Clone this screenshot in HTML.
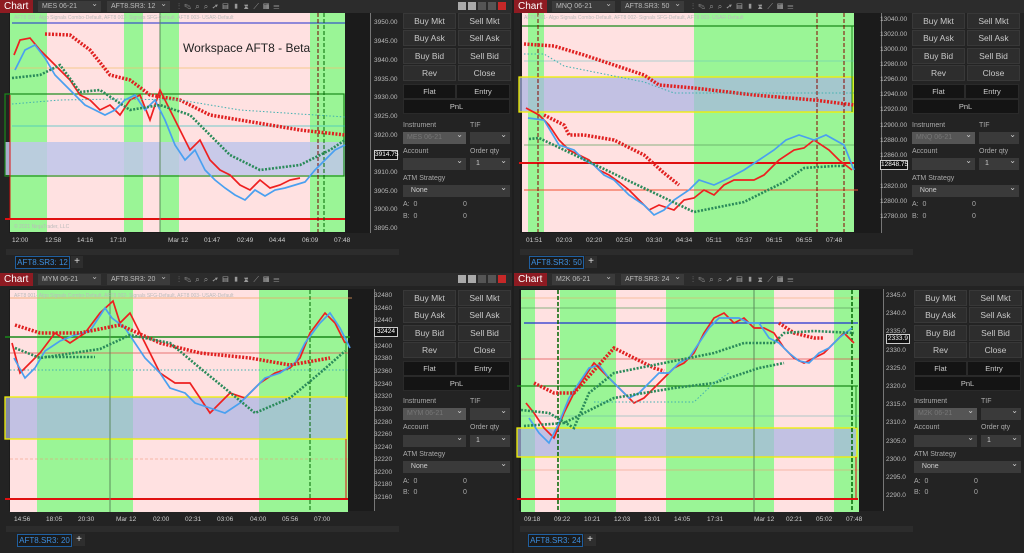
<!DOCTYPE html>
<html><head><meta charset="utf-8"><style>
*{margin:0;padding:0;box-sizing:border-box}
body{width:1024px;height:553px;background:#1e1e1e;font-family:"Liberation Sans",sans-serif;overflow:hidden;position:relative}
.p{position:absolute;width:512px;height:276px;background:#232323;overflow:hidden}
.tb{position:absolute;left:0;top:0;width:512px;height:13px;background:#2c2c2c}
.ct{position:absolute;left:0;top:0;width:33px;height:13px;background:#8e1b22;color:#fff;font-size:10px;line-height:13px;padding-left:4px}
.dd{position:absolute;top:1px;height:11px;background:#3b3b3b;color:#bbb;font-size:7px;line-height:11px;padding-left:4px}
.dd:after{content:"⌄";position:absolute;right:3px;top:-3px;font-size:8px}
.ic{position:absolute;top:1px;left:178px;color:#999;font-size:8px;letter-spacing:4px;line-height:11px}
.wb{position:absolute;top:2px;width:8px;height:8px;background:#aaa}
.wx{background:#c62828}
.plot{position:absolute;left:9px;top:13px;width:362px;height:220px;background:#1b1b1b;border-right:1px solid #777}
.ax{position:absolute;left:374px;font-size:6.5px;color:#bbb}
.tm{position:absolute;top:237px;font-size:6.5px;color:#ccc}
.sb{position:absolute;left:6px;top:249px;width:393px;height:6px;background:#2c2c2c}
.tab{position:absolute;left:15px;top:256px;width:55px;height:13px;border:1px solid #1f5fa0;background:#1a1a1a;color:#3d8fe0;font-size:8px;line-height:11px;text-align:center}
.plus{position:absolute;left:71px;top:256px;width:12px;height:12px;background:#2e2e2e;color:#ddd;font-size:10px;line-height:12px;text-align:center}
.b{position:absolute;width:53px;height:16px;background:#2d2d2d;border:1px solid #383838;color:#c8c8c8;font-size:8.5px;line-height:14px;text-align:center}
.d{position:absolute;height:15px;background:#141414;border:1px solid #2a2a2a;color:#ccc;font-size:7.5px;line-height:13px;text-align:center}
.l{position:absolute;color:#aaa;font-size:7px}
.s{position:absolute;height:12px;background:#3a3a3a;color:#777;font-size:7px;line-height:12px;padding-left:4px}
.s:after{content:"⌄";position:absolute;right:3px;top:-3px;color:#ccc;font-size:8px}
.pl{position:absolute;left:374px;width:24px;height:10px;background:#111;border:1px solid #ccc;color:#fff;font-size:6.5px;line-height:8px;text-align:center}
polyline[stroke-width="1.2"]{stroke-width:1.7}
polyline[stroke="#e02020"][stroke-dasharray="2,1.5"]{stroke-width:3.5}
polyline[stroke="#2a8a5a"][stroke-dasharray="2,1.5"]{stroke-width:2.6}
</style></head><body>

<!-- PANEL 1 -->
<div class="p" style="left:0;top:0">
<div class="tb"></div><div class="ct">Chart</div>
<div class="dd" style="left:38px;width:63px">MES 06-21</div><div class="dd" style="left:107px;width:63px">AFT8.SR3: 12</div>
<div class="ic">⫶✎⌕⌕➚▤▮♜⟋▦☰</div>
<div class="wb" style="left:458px"></div><div class="wb" style="left:468px"></div><div class="wb" style="left:478px;background:#555"></div><div class="wb" style="left:488px;background:#555"></div><div class="wb wx" style="left:498px"></div>
<div class="plot"></div>
<svg style="position:absolute;left:0;top:0" width="400" height="240">
<rect x="10" y="13" width="335" height="219" fill="#ffe1e1"/>
<g fill="#9af596"><rect x="10" y="13" width="37" height="219"/><rect x="124" y="13" width="19" height="219"/><rect x="160" y="13" width="19" height="219"/><rect x="310" y="13" width="35" height="219"/></g>
<rect x="5" y="142" width="340" height="33" fill="#c0c6ea" opacity=".85"/>
<line x1="12" y1="23" x2="345" y2="23" stroke="#2030d0"/>
<line x1="10" y1="68" x2="345" y2="68" stroke="#f0c070" stroke-width=".7"/>
<rect x="5" y="94" width="339" height="82" fill="none" stroke="#1a8a1a" stroke-width="1.2"/>
<line x1="12" y1="126" x2="345" y2="126" stroke="#40c0c0" stroke-width=".7"/>
<line x1="5" y1="219" x2="345" y2="219" stroke="#e01010" stroke-width="2"/>
<line x1="10" y1="219" x2="10" y2="95" stroke="#e01010"/>
<line x1="160" y1="13" x2="160" y2="232" stroke="#5a8a5a"/>
<line x1="318" y1="13" x2="318" y2="232" stroke="#700" stroke-dasharray="4,2"/><line x1="324" y1="13" x2="324" y2="232" stroke="#060" stroke-dasharray="4,2"/>
<polyline fill="none" stroke="#ee2020" stroke-width="1.2" points="14,55 20,40 30,38 40,50 50,60 60,70 70,80 80,95 90,100 100,110 110,105 120,115 130,100 140,95 150,120 160,90 170,110 180,130 190,150 200,140 210,160 220,170 230,175 240,185 250,190 260,180 270,188 280,185 290,180 300,178"/>
<polyline fill="none" stroke="#4aa0f0" stroke-width="1.2" points="15,70 25,50 35,45 45,58 55,75 65,85 75,95 85,105 95,110 105,115 115,110 125,100 135,95 145,110 155,100 165,120 175,145 185,160 195,150 205,170 215,180 225,188 235,195 245,200 255,190 265,196 275,190 285,188 295,185 305,182 315,170 325,160 335,150 345,145"/>
<polyline fill="none" stroke="#e02020" stroke-width="2.5" stroke-dasharray="2,1.5" points="45,34 70,35 90,50 110,75 130,80 150,95 180,100 210,115 240,120 270,125 300,130 345,135"/>
<polyline fill="none" stroke="#2a8a5a" stroke-width="2" stroke-dasharray="2,1.5" points="12,78 40,75 60,65 80,92 100,90 130,110 160,105 190,115 230,155 260,170 300,165 330,150 345,140"/>
<polyline fill="none" stroke="#40b0b0" stroke-width="1" stroke-dasharray="1.5,2" points="12,104 60,100 120,99 180,100 240,110 345,117"/>
<text x="183" y="52" font-size="12" fill="#222" font-family="Liberation Sans">Workspace AFT8 - Beta</text>
<text x="14" y="228" font-size="5" fill="#bbb">© 2021 NinjaTrader, LLC</text>
<text x="14" y="19" font-size="5" fill="#bbb">AFT8 001- Algo Signals Combo-Default,  AFT8 002- Signals SFG-Default,  AFT8 003- USAR-Default</text>
</svg>
<div class="ax" style="top:19px">3950.00</div><div class="ax" style="top:38px">3945.00</div><div class="ax" style="top:57px">3940.00</div><div class="ax" style="top:76px">3935.00</div><div class="ax" style="top:94px">3930.00</div><div class="ax" style="top:113px">3925.00</div><div class="ax" style="top:132px">3920.00</div><div class="ax" style="top:169px">3910.00</div><div class="ax" style="top:188px">3905.00</div><div class="ax" style="top:206px">3900.00</div><div class="ax" style="top:225px">3895.00</div>
<div class="pl" style="top:150px">3914.75</div>
<div class="tm" style="left:12px">12:00</div><div class="tm" style="left:45px">12:58</div><div class="tm" style="left:77px">14:16</div><div class="tm" style="left:110px">17:10</div><div class="tm" style="left:168px">Mar 12</div><div class="tm" style="left:204px">01:47</div><div class="tm" style="left:237px">02:49</div><div class="tm" style="left:269px">04:44</div><div class="tm" style="left:302px">06:09</div><div class="tm" style="left:334px">07:48</div>
<div class="sb"></div><div class="tab">AFT8.SR3: 12</div><div class="plus">+</div>
<div class="b" style="left:403px;top:13px">Buy Mkt</div><div class="b" style="left:458px;top:13px">Sell Mkt</div>
<div class="b" style="left:403px;top:30px">Buy Ask</div><div class="b" style="left:458px;top:30px">Sell Ask</div>
<div class="b" style="left:403px;top:48px">Buy Bid</div><div class="b" style="left:458px;top:48px">Sell Bid</div>
<div class="b" style="left:403px;top:65px">Rev</div><div class="b" style="left:458px;top:65px">Close</div>
<div class="d" style="left:403px;top:84px;width:53px">Flat</div><div class="d" style="left:456px;top:84px;width:54px">Entry</div><div class="d" style="left:403px;top:99px;width:107px">PnL</div>
<div class="l" style="left:403px;top:122px">Instrument</div><div class="l" style="left:470px;top:122px">TIF</div>
<div class="s" style="left:403px;top:132px;width:63px;background:#555">MES 06-21</div><div class="s" style="left:470px;top:132px;width:40px"></div>
<div class="l" style="left:403px;top:148px">Account</div><div class="l" style="left:470px;top:148px">Order qty</div>
<div class="s" style="left:403px;top:158px;width:63px"></div><div class="s" style="left:470px;top:158px;width:40px;color:#ccc">&nbsp;1</div>
<div class="l" style="left:403px;top:175px">ATM Strategy</div>
<div class="s" style="left:403px;top:185px;width:107px;color:#ccc">&nbsp;&nbsp;None</div>
<div class="l" style="left:403px;top:201px">A:&nbsp; 0</div><div class="l" style="left:463px;top:201px">0</div>
<div class="l" style="left:403px;top:213px">B:&nbsp; 0</div><div class="l" style="left:463px;top:213px">0</div>
</div>

<!-- PANEL 2 -->
<div class="p" style="left:514px;top:0;width:510px">
<div class="tb"></div><div class="ct">Chart</div>
<div class="dd" style="left:38px;width:63px">MNQ 06-21</div><div class="dd" style="left:107px;width:63px">AFT8.SR3: 50</div>
<div class="ic">⫶✎⌕⌕➚▤▮♜⟋▦☰</div>
<div class="plot" style="left:6px"></div>
<svg style="position:absolute;left:0;top:0" width="400" height="240">
<rect x="8" y="13" width="332" height="219" fill="#ffe1e1"/>
<g fill="#9af596"><rect x="14" y="13" width="16" height="219"/><rect x="180" y="13" width="160" height="219"/></g>
<rect x="5" y="77" width="334" height="35" fill="#a8b4e4" opacity=".7"/>
<rect x="5" y="77" width="334" height="35" fill="none" stroke="#f0f000" stroke-width="1.3"/>
<line x1="8" y1="26" x2="340" y2="26" stroke="#1a8a1a" stroke-width="1.2"/><line x1="338" y1="26" x2="338" y2="112" stroke="#1a8a1a"/>
<line x1="10" y1="61" x2="340" y2="61" stroke="#60c0c0" stroke-width=".6"/>
<line x1="10" y1="145" x2="340" y2="145" stroke="#60a060" stroke-width=".7"/>
<line x1="5" y1="163" x2="340" y2="163" stroke="#e01010" stroke-width="2"/>
<line x1="10" y1="190" x2="344" y2="190" stroke="#f05030"/>
<line x1="24" y1="13" x2="24" y2="232" stroke="#800" stroke-dasharray="4,2"/><line x1="303" y1="13" x2="303" y2="232" stroke="#800" stroke-dasharray="4,2"/><line x1="330" y1="13" x2="330" y2="232" stroke="#800" stroke-dasharray="4,2"/>
<polyline fill="none" stroke="#e02020" stroke-width="2.5" stroke-dasharray="2,1.5" points="10,44 40,46 70,55 100,65 130,75 145,85 180,88 240,95 300,100 340,105"/>
<polyline fill="none" stroke="#40b0b0" stroke-width="1" stroke-dasharray="1.5,2" points="10,54 30,54 50,66 80,72 110,78 130,82 160,93 220,93 340,93"/>
<polyline fill="none" stroke="#ee2020" stroke-width="1.2" points="12,108 25,115 35,125 45,140 55,150 65,155 75,160 85,170 95,175 105,182 115,190 125,200 135,210 145,205 160,210 170,200 180,198 190,190 200,195 210,185 220,180 240,180 250,175 265,160 280,150 290,148 300,140 315,150 325,160 338,170"/>
<polyline fill="none" stroke="#4aa0f0" stroke-width="1.2" points="14,118 30,120 45,145 60,150 70,160 80,165 90,175 100,180 115,195 130,205 140,215 150,210 160,200 175,190 185,180 200,185 215,178 230,170 245,160 260,150 272,140 285,135 300,140 312,135 330,145 340,170"/>
<polyline fill="none" stroke="#e02020" stroke-width="2" stroke-dasharray="2,1.5" points="30,115 50,125 55,135 70,135 100,140 130,155 150,173 165,185"/>
<polyline fill="none" stroke="#2a8a5a" stroke-width="2" stroke-dasharray="2,1.5" points="15,139 25,138 180,212 230,202 270,182 290,168 320,166 330,166"/>
<text x="10" y="19" font-size="5" fill="#bbb">AFT8 001- Algo Signals Combo-Default,  AFT8 002- Signals SFG-Default,  AFT8 003- USAR-Default</text>
</svg>
<div class="ax" style="left:366px;top:16px">13040.00</div><div class="ax" style="left:366px;top:31px">13020.00</div><div class="ax" style="left:366px;top:46px">13000.00</div><div class="ax" style="left:366px;top:61px">12980.00</div><div class="ax" style="left:366px;top:76px">12960.00</div><div class="ax" style="left:366px;top:91px">12940.00</div><div class="ax" style="left:366px;top:106px">12920.00</div><div class="ax" style="left:366px;top:122px">12900.00</div><div class="ax" style="left:366px;top:137px">12880.00</div><div class="ax" style="left:366px;top:152px">12860.00</div><div class="ax" style="left:366px;top:183px">12820.00</div><div class="ax" style="left:366px;top:198px">12800.00</div><div class="ax" style="left:366px;top:213px">12780.00</div>
<div class="pl" style="left:366px;top:160px;width:28px">12848.75</div>
<div class="tm" style="left:12px">01:51</div><div class="tm" style="left:42px">02:03</div><div class="tm" style="left:72px">02:20</div><div class="tm" style="left:102px">02:50</div><div class="tm" style="left:132px">03:30</div><div class="tm" style="left:162px">04:34</div><div class="tm" style="left:192px">05:11</div><div class="tm" style="left:222px">05:37</div><div class="tm" style="left:252px">06:15</div><div class="tm" style="left:282px">06:55</div><div class="tm" style="left:312px">07:48</div>
<div class="sb"></div><div class="tab">AFT8.SR3: 50</div><div class="plus">+</div>
<div class="b" style="left:398px;top:13px">Buy Mkt</div><div class="b" style="left:453px;top:13px">Sell Mkt</div>
<div class="b" style="left:398px;top:30px">Buy Ask</div><div class="b" style="left:453px;top:30px">Sell Ask</div>
<div class="b" style="left:398px;top:48px">Buy Bid</div><div class="b" style="left:453px;top:48px">Sell Bid</div>
<div class="b" style="left:398px;top:65px">Rev</div><div class="b" style="left:453px;top:65px">Close</div>
<div class="d" style="left:398px;top:84px;width:53px">Flat</div><div class="d" style="left:451px;top:84px;width:54px">Entry</div><div class="d" style="left:398px;top:99px;width:107px">PnL</div>
<div class="l" style="left:398px;top:122px">Instrument</div><div class="l" style="left:465px;top:122px">TIF</div>
<div class="s" style="left:398px;top:132px;width:63px;background:#555">MNQ 06-21</div><div class="s" style="left:465px;top:132px;width:40px"></div>
<div class="l" style="left:398px;top:148px">Account</div><div class="l" style="left:465px;top:148px">Order qty</div>
<div class="s" style="left:398px;top:158px;width:63px"></div><div class="s" style="left:465px;top:158px;width:40px;color:#ccc">&nbsp;1</div>
<div class="l" style="left:398px;top:175px">ATM Strategy</div>
<div class="s" style="left:398px;top:185px;width:107px;color:#ccc">&nbsp;&nbsp;None</div>
<div class="l" style="left:398px;top:201px">A:&nbsp; 0</div><div class="l" style="left:458px;top:201px">0</div>
<div class="l" style="left:398px;top:213px">B:&nbsp; 0</div><div class="l" style="left:458px;top:213px">0</div>
</div>

<!-- PANEL 3 -->
<div class="p" style="left:0;top:273px;height:280px">
<div class="tb"></div><div class="ct">Chart</div>
<div class="dd" style="left:38px;width:63px">MYM 06-21</div><div class="dd" style="left:107px;width:63px">AFT8.SR3: 20</div>
<div class="ic">⫶✎⌕⌕➚▤▮♜⟋▦☰</div>
<div class="wb" style="left:458px"></div><div class="wb" style="left:468px"></div><div class="wb" style="left:478px;background:#555"></div><div class="wb" style="left:488px;background:#555"></div><div class="wb wx" style="left:498px"></div>
<div class="plot" style="top:16px;height:222px;width:366px"></div>
<svg style="position:absolute;left:0;top:0" width="400" height="245">
<rect x="10" y="17" width="338" height="222" fill="#ffe1e1"/>
<g fill="#9af596"><rect x="37" y="17" width="96" height="222"/><rect x="259" y="17" width="89" height="222"/></g>
<rect x="5" y="124" width="342" height="42" fill="#a8b4e4" opacity=".7"/>
<rect x="5" y="124" width="342" height="42" fill="none" stroke="#f0f000" stroke-width="1.3"/>
<line x1="10" y1="25" x2="352" y2="25" stroke="#f0a060" stroke-width=".7"/>
<line x1="5" y1="64" x2="350" y2="64" stroke="#1a8a1a" stroke-width="1.5"/><line x1="346" y1="64" x2="346" y2="124" stroke="#1a8a1a"/>
<line x1="10" y1="80" x2="348" y2="80" stroke="#e05050" stroke-width=".7"/>
<line x1="10" y1="186" x2="348" y2="186" stroke="#f09070" stroke-width=".6" stroke-dasharray="3,2"/>
<line x1="5" y1="226" x2="348" y2="226" stroke="#e01010" stroke-width="2"/><line x1="346" y1="166" x2="346" y2="226" stroke="#e01010"/>
<line x1="110" y1="17" x2="110" y2="239" stroke="#5a8a5a"/>
<line x1="310" y1="17" x2="310" y2="239" stroke="#060" stroke-dasharray="4,2"/>
<line x1="10" y1="97" x2="348" y2="97" stroke="#40b0b0" stroke-width="1" stroke-dasharray="1.5,2"/>
<polyline fill="none" stroke="#ee2020" stroke-width="1.2" points="12,70 20,100 30,90 40,80 55,60 70,70 85,60 100,40 113,28 120,50 130,40 140,60 150,80 160,100 175,110 190,110 200,125 210,140 220,130 230,120 245,125 260,110 275,100 290,95 300,85 310,60 325,40 335,50 345,70"/>
<polyline fill="none" stroke="#4aa0f0" stroke-width="1.2" points="14,85 25,105 35,95 45,78 60,68 75,62 90,58 105,35 112,45 125,55 135,70 145,85 160,100 170,115 185,120 195,130 210,135 225,140 240,130 255,115 265,105 280,100 295,90 305,70 320,50 330,40 340,55 350,75"/>
<polyline fill="none" stroke="#e02020" stroke-width="2.5" stroke-dasharray="2,1.5" points="15,52 40,60 80,60 120,52 160,70 200,80 250,85 290,92 330,85"/>
<polyline fill="none" stroke="#2a8a5a" stroke-width="2" stroke-dasharray="2,1.5" points="15,75 40,85 100,76 130,62 170,70 200,95 255,140 290,125 320,100 345,78"/>
<polyline fill="none" stroke="#2a8a5a" stroke-width="2" stroke-dasharray="2,1.5" points="45,84 95,84"/>
<text x="14" y="24" font-size="5" fill="#bbb">AFT8 001- Algo Signals Combo-Default,  AFT8 002- Signals SFG-Default,  AFT8 003- USAR-Default</text>
</svg>
<div class="ax" style="top:19px">32480</div><div class="ax" style="top:32px">32460</div><div class="ax" style="top:44px">32440</div><div class="ax" style="top:70px">32400</div><div class="ax" style="top:82px">32380</div><div class="ax" style="top:95px">32360</div><div class="ax" style="top:108px">32340</div><div class="ax" style="top:120px">32320</div><div class="ax" style="top:133px">32300</div><div class="ax" style="top:146px">32280</div><div class="ax" style="top:158px">32260</div><div class="ax" style="top:171px">32240</div><div class="ax" style="top:183px">32220</div><div class="ax" style="top:196px">32200</div><div class="ax" style="top:208px">32180</div><div class="ax" style="top:221px">32160</div>
<div class="pl" style="top:54px">32424</div>
<div class="tm" style="left:14px;top:243px">14:56</div><div class="tm" style="left:46px;top:243px">18:05</div><div class="tm" style="left:78px;top:243px">20:30</div><div class="tm" style="left:116px;top:243px">Mar 12</div><div class="tm" style="left:153px;top:243px">02:00</div><div class="tm" style="left:185px;top:243px">02:31</div><div class="tm" style="left:217px;top:243px">03:06</div><div class="tm" style="left:250px;top:243px">04:00</div><div class="tm" style="left:282px;top:243px">05:56</div><div class="tm" style="left:314px;top:243px">07:00</div>
<div class="sb" style="top:253px"></div><div class="tab" style="top:261px;left:17px">AFT8.SR3: 20</div><div class="plus" style="top:261px;left:73px">+</div>
<div class="b" style="left:403px;top:17px">Buy Mkt</div><div class="b" style="left:458px;top:17px">Sell Mkt</div>
<div class="b" style="left:403px;top:34px">Buy Ask</div><div class="b" style="left:458px;top:34px">Sell Ask</div>
<div class="b" style="left:403px;top:52px">Buy Bid</div><div class="b" style="left:458px;top:52px">Sell Bid</div>
<div class="b" style="left:403px;top:69px">Rev</div><div class="b" style="left:458px;top:69px">Close</div>
<div class="d" style="left:403px;top:88px;width:53px">Flat</div><div class="d" style="left:456px;top:88px;width:54px">Entry</div><div class="d" style="left:403px;top:103px;width:107px">PnL</div>
<div class="l" style="left:403px;top:125px">Instrument</div><div class="l" style="left:470px;top:125px">TIF</div>
<div class="s" style="left:403px;top:135px;width:63px;background:#555">MYM 06-21</div><div class="s" style="left:470px;top:135px;width:40px"></div>
<div class="l" style="left:403px;top:151px">Account</div><div class="l" style="left:470px;top:151px">Order qty</div>
<div class="s" style="left:403px;top:162px;width:63px"></div><div class="s" style="left:470px;top:162px;width:40px;color:#ccc">&nbsp;1</div>
<div class="l" style="left:403px;top:178px">ATM Strategy</div>
<div class="s" style="left:403px;top:188px;width:107px;color:#ccc">&nbsp;&nbsp;None</div>
<div class="l" style="left:403px;top:205px">A:&nbsp; 0</div><div class="l" style="left:463px;top:205px">0</div>
<div class="l" style="left:403px;top:216px">B:&nbsp; 0</div><div class="l" style="left:463px;top:216px">0</div>
</div>

<!-- PANEL 4 -->
<div class="p" style="left:514px;top:273px;width:510px;height:280px">
<div class="tb"></div><div class="ct">Chart</div>
<div class="dd" style="left:38px;width:63px">M2K 06-21</div><div class="dd" style="left:107px;width:63px">AFT8.SR3: 24</div>
<div class="ic">⫶✎⌕⌕➚▤▮♜⟋▦☰</div>
<div class="plot" style="left:5px;top:16px;height:222px;width:365px"></div>
<svg style="position:absolute;left:0;top:0" width="400" height="245">
<rect x="7" y="17" width="338" height="222" fill="#ffe1e1"/>
<g fill="#9af596"><rect x="7" y="17" width="14" height="222"/><rect x="46" y="17" width="56" height="222"/><rect x="152" y="17" width="108" height="222"/><rect x="320" y="17" width="25" height="222"/></g>
<rect x="3" y="155" width="340" height="29" fill="#a8b4e4" opacity=".7"/>
<rect x="3" y="155" width="340" height="29" fill="none" stroke="#f0f000" stroke-width="1.3"/>
<line x1="7" y1="25" x2="345" y2="25" stroke="#f0a060" stroke-width=".6"/>
<line x1="7" y1="35" x2="345" y2="35" stroke="#60a060" stroke-width=".7"/>
<line x1="10" y1="50" x2="344" y2="50" stroke="#2030d0" stroke-width="1.2"/>
<line x1="3" y1="113" x2="344" y2="113" stroke="#1a8a1a" stroke-width="1.2"/><line x1="342" y1="113" x2="342" y2="155" stroke="#1a8a1a"/>
<line x1="7" y1="86" x2="345" y2="86" stroke="#e05050" stroke-width=".7"/>
<line x1="7" y1="143" x2="345" y2="143" stroke="#60b0b0" stroke-width=".6"/>
<line x1="7" y1="197" x2="345" y2="197" stroke="#f09070" stroke-width=".6"/>
<line x1="3" y1="226" x2="344" y2="226" stroke="#e01010" stroke-width="2"/><line x1="342" y1="184" x2="342" y2="226" stroke="#e01010"/>
<line x1="240" y1="17" x2="240" y2="239" stroke="#5a8a5a"/>
<line x1="44" y1="17" x2="44" y2="239" stroke="#060" stroke-dasharray="4,2" stroke-width="1.5"/><line x1="338" y1="17" x2="338" y2="239" stroke="#060" stroke-dasharray="4,2" stroke-width="1.5"/>
<polyline fill="none" stroke="#ee2020" stroke-width="1.2" points="12,130 20,140 30,155 40,165 50,140 60,120 70,105 80,90 90,100 100,110 110,120 120,130 130,125 140,115 150,105 160,95 170,90 180,80 190,60 200,45 210,40 220,50 230,45 240,55 250,55 260,60 270,75 280,85 290,90 300,85 310,80 320,70 330,60 340,70"/>
<polyline fill="none" stroke="#4aa0f0" stroke-width="1.2" points="15,145 25,160 35,170 45,150 55,125 65,110 75,95 85,92 95,105 105,115 115,125 125,120 135,110 145,100 155,100 165,90 175,85 185,70 195,55 205,45 215,45 225,45 235,50 245,50 255,65 265,70 275,80 285,88 295,90 305,80 315,75 325,65 338,55"/>
<polyline fill="none" stroke="#e02020" stroke-width="2.5" stroke-dasharray="2,1.5" points="20,110 40,120 60,120 100,75 120,85 140,95 150,98"/>
<polyline fill="none" stroke="#e02020" stroke-width="2.5" stroke-dasharray="2,1.5" points="265,50 280,60 300,65 310,65"/>
<polyline fill="none" stroke="#2a8a5a" stroke-width="2" stroke-dasharray="2,1.5" points="7,137 35,140 60,155 75,120 100,100 150,90 200,80 230,70 260,70 270,60 300,58 340,60"/>
<polyline fill="none" stroke="#2a8a5a" stroke-width="2" stroke-dasharray="2,1.5" points="10,153 50,150 100,125 160,115 200,110 245,95 270,90"/>
<polyline fill="none" stroke="#40b0b0" stroke-width="1" stroke-dasharray="1.5,2" points="80,129 180,129 200,110 215,100"/>
</svg>
<div class="ax" style="left:372px;top:19px">2345.0</div><div class="ax" style="left:372px;top:37px">2340.0</div><div class="ax" style="left:372px;top:55px">2335.0</div><div class="ax" style="left:372px;top:74px">2330.0</div><div class="ax" style="left:372px;top:92px">2325.0</div><div class="ax" style="left:372px;top:110px">2320.0</div><div class="ax" style="left:372px;top:128px">2315.0</div><div class="ax" style="left:372px;top:146px">2310.0</div><div class="ax" style="left:372px;top:165px">2305.0</div><div class="ax" style="left:372px;top:183px">2300.0</div><div class="ax" style="left:372px;top:201px">2295.0</div><div class="ax" style="left:372px;top:219px">2290.0</div>
<div class="pl" style="left:372px;top:61px">2333.9</div>
<div class="tm" style="left:10px;top:243px">09:18</div><div class="tm" style="left:40px;top:243px">09:22</div><div class="tm" style="left:70px;top:243px">10:21</div><div class="tm" style="left:100px;top:243px">12:03</div><div class="tm" style="left:130px;top:243px">13:01</div><div class="tm" style="left:160px;top:243px">14:05</div><div class="tm" style="left:193px;top:243px">17:31</div><div class="tm" style="left:240px;top:243px">Mar 12</div><div class="tm" style="left:272px;top:243px">02:21</div><div class="tm" style="left:302px;top:243px">05:02</div><div class="tm" style="left:332px;top:243px">07:48</div>
<div class="sb" style="top:253px"></div><div class="tab" style="top:261px;left:14px">AFT8.SR3: 24</div><div class="plus" style="top:261px;left:70px">+</div>
<div class="b" style="left:400px;top:17px">Buy Mkt</div><div class="b" style="left:455px;top:17px">Sell Mkt</div>
<div class="b" style="left:400px;top:34px">Buy Ask</div><div class="b" style="left:455px;top:34px">Sell Ask</div>
<div class="b" style="left:400px;top:52px">Buy Bid</div><div class="b" style="left:455px;top:52px">Sell Bid</div>
<div class="b" style="left:400px;top:69px">Rev</div><div class="b" style="left:455px;top:69px">Close</div>
<div class="d" style="left:400px;top:88px;width:53px">Flat</div><div class="d" style="left:453px;top:88px;width:54px">Entry</div><div class="d" style="left:400px;top:103px;width:107px">PnL</div>
<div class="l" style="left:400px;top:125px">Instrument</div><div class="l" style="left:467px;top:125px">TIF</div>
<div class="s" style="left:400px;top:135px;width:63px;background:#555">M2K 06-21</div><div class="s" style="left:467px;top:135px;width:40px"></div>
<div class="l" style="left:400px;top:151px">Account</div><div class="l" style="left:467px;top:151px">Order qty</div>
<div class="s" style="left:400px;top:162px;width:63px"></div><div class="s" style="left:467px;top:162px;width:40px;color:#ccc">&nbsp;1</div>
<div class="l" style="left:400px;top:178px">ATM Strategy</div>
<div class="s" style="left:400px;top:188px;width:107px;color:#ccc">&nbsp;&nbsp;None</div>
<div class="l" style="left:400px;top:205px">A:&nbsp; 0</div><div class="l" style="left:460px;top:205px">0</div>
<div class="l" style="left:400px;top:216px">B:&nbsp; 0</div><div class="l" style="left:460px;top:216px">0</div>
</div>
</body></html>
